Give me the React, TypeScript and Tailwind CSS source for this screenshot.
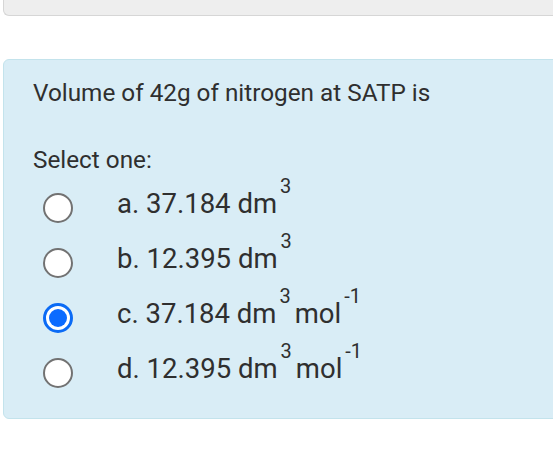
const options = [
  { letter: 'a', value: '37.184', mol: false, checked: false },
  { letter: 'b', value: '12.395', mol: false, checked: false },
  { letter: 'c', value: '37.184', mol: true, checked: true },
  { letter: 'd', value: '12.395', mol: true, checked: false },
]

function Radio({ checked }: { checked: boolean }) {
  if (checked) {
    return (
      <span className="mt-[8px] flex h-[30px] w-[30px] shrink-0 items-center justify-center rounded-full border-[3px] border-[#0b6bf5] bg-white">
        <span className="h-[18px] w-[18px] rounded-full bg-[#0b6bff]" />
      </span>
    )
  }
  return <span className="mt-[8px] h-[30px] w-[30px] shrink-0 rounded-full border-2 border-[#727272] bg-white" />
}

export default function App() {
  return (
    <div className="w-[553px] h-[449px] overflow-hidden bg-white text-[#2f2f2f]" style={{ fontFamily: 'Roboto, "Noto Sans", sans-serif' }}>
      <div className="ml-[3px] h-[16px] w-[600px] rounded-bl-[6px] border-b border-l border-[#d6d6d6] bg-[#eeeeee]" />
      <div className="ml-[3px] mt-[43px] w-[600px] rounded-[6px] border border-[#c3e3ec] bg-[#d9edf6] pl-[29px] pt-[17px] pb-[22px]">
        <p className="text-[24.3px] leading-[32px]">Volume of 42g of nitrogen at SATP is</p>
        <p className="mt-[35px] text-[24.3px] leading-[32px]">Select one:</p>
        <div className="flex flex-col">
          {options.map((o) => (
            <div key={o.letter} className="flex h-[55px] items-center">
              <span className="ml-[10px] flex">
                <Radio checked={o.checked} />
              </span>
              <span className="ml-[44px] whitespace-nowrap text-[27.5px] leading-[55px]">
                {o.letter}. {o.value} dm
                <span className="ml-[3px] align-[20px] text-[20px] leading-none">3</span>
                {o.mol && (
                  <>
                    <span className="ml-[4px]">mol</span>
                    <span className="ml-[3px] align-[20px] text-[20px] leading-none">-1</span>
                  </>
                )}
              </span>
            </div>
          ))}
        </div>
      </div>
    </div>
  )
}
